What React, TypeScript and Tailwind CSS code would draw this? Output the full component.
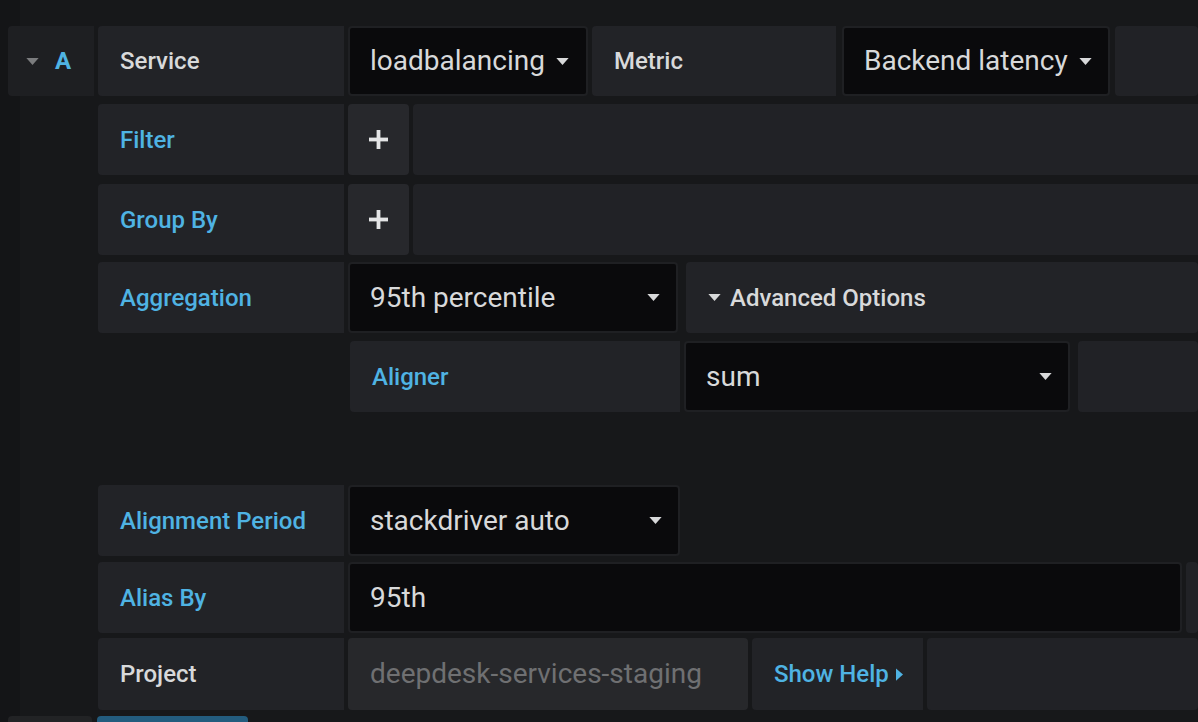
import type { ReactNode } from "react";

const font = { fontFamily: "Roboto, 'Noto Sans', sans-serif" };

function Caret({ className = "" }: { className?: string }) {
  return (
    <svg viewBox="0 0 14 8" className={`w-[13px] h-[7px] shrink-0 ${className}`}>
      <path d="M0 0 L14 0 L7 8 Z" fill="currentColor" />
    </svg>
  );
}

function Label({ children, blue = false, w = "w-[246px]" }: { children: ReactNode; blue?: boolean; w?: string }) {
  return (
    <div
      className={`${w} h-full shrink-0 flex items-center pl-[22px] rounded-l-[4px] bg-[#222327] text-[24px] font-medium whitespace-nowrap ${
        blue ? "text-[#4fb3e3]" : "text-[#d8d9da]"
      }`}
    >
      {children}
    </div>
  );
}

function Select({ value, w, inline = false, className = "" }: { value: string; w: string; inline?: boolean; className?: string }) {
  return (
    <div
      className={`${w} h-full shrink-0 flex items-center pl-[20px] pr-[16px] rounded-[4px] border-2 border-[#1f2023] bg-[#0a0a0c] text-[28px] text-[#d8d9da] whitespace-nowrap ${
        inline ? "gap-[11px]" : "justify-between"
      } ${className}`}
    >
      <span>{value}</span>
      <Caret />
    </div>
  );
}

function Filler({ className = "" }: { className?: string }) {
  return <div className={`flex-1 h-full rounded-[4px] bg-[#212226] ${className}`} />;
}

function Plus() {
  return (
    <div className="w-[61px] h-full shrink-0 flex items-center justify-center rounded-[4px] bg-[#27282c]">
      <svg viewBox="0 0 20 20" className="w-[19px] h-[19px]">
        <rect x="8" y="0" width="4" height="20" fill="#e4e5e6" />
        <rect x="0" y="8" width="20" height="4" fill="#e4e5e6" />
      </svg>
    </div>
  );
}

export default function App() {
  return (
    <div className="w-[1198px] h-[722px] overflow-hidden bg-[#17181a] flex" style={font}>
      <div className="w-[20px] shrink-0 bg-[#141517]" />
      <div className="flex-1 flex flex-col pt-[26px] -ml-[12px]">
        <div className="flex shrink-0 h-[70px] gap-[4px]">
          <div className="w-[86px] h-full shrink-0 flex items-center pl-[18px] gap-[16px] rounded-l-[4px] bg-[#1e1f22]">
            <Caret className="text-[#7b7c7e]" />
            <span className="text-[24px] font-bold text-[#4fb3e3]">A</span>
          </div>
          <Label>Service</Label>
          <Select value="loadbalancing" w="w-[240px]" inline />
          <Label w="w-[244px]">Metric</Label>
          <Select value="Backend latency" w="w-[268px]" inline className="ml-[2px]" />
          <Filler className="ml-[1px]" />
        </div>

        <div className="flex shrink-0 flex-col pl-[90px]">
          <div className="flex shrink-0 h-[71px] gap-[4px] mt-[8px]">
            <Label blue>Filter</Label>
            <Plus />
            <Filler className="rounded-r-none" />
          </div>

          <div className="flex shrink-0 h-[71px] gap-[4px] mt-[9px]">
            <Label blue>Group By</Label>
            <Plus />
            <Filler className="rounded-r-none" />
          </div>

          <div className="flex shrink-0 h-[71px] gap-[4px] mt-[7px]">
            <Label blue>Aggregation</Label>
            <Select value="95th percentile" w="w-[330px]" />
            <div className="ml-[4px] flex-1 h-full flex items-center pl-[22px] gap-[9px] rounded-[4px] bg-[#222327] text-[24px] font-medium text-[#d8d9da] whitespace-nowrap">
              <Caret />
              <span>Advanced Options</span>
            </div>
          </div>

          <div className="flex shrink-0 h-[71px] gap-[4px] mt-[8px] pl-[252px]">
            <Label blue w="w-[330px]">Aligner</Label>
            <Select value="sum" w="w-[386px]" />
            <Filler className="ml-[4px]" />
          </div>

          <div className="flex shrink-0 h-[71px] gap-[4px] mt-[73px]">
            <Label blue>Alignment Period</Label>
            <Select value="stackdriver auto" w="w-[332px]" />
          </div>

          <div className="flex shrink-0 h-[71px] gap-[4px] mt-[6px]">
            <Label blue>Alias By</Label>
            <div className="w-[834px] h-full shrink-0 flex items-center pl-[20px] rounded-[4px] border-2 border-[#1f2023] bg-[#0a0a0c] text-[28px] text-[#d8d9da]">
              95th
            </div>
            <Filler />
          </div>

          <div className="flex shrink-0 h-[72px] gap-[4px] mt-[5px]">
            <Label>Project</Label>
            <div className="w-[400px] h-full shrink-0 flex items-center pl-[22px] rounded-[4px] bg-[#27282b] text-[28px] text-[#6f7072] whitespace-nowrap">
              deepdesk-services-staging
            </div>
            <div className="w-[171px] h-full shrink-0 flex items-center pl-[22px] gap-[7px] rounded-l-[4px] bg-[#222327] text-[24px] font-medium text-[#4fb3e3] whitespace-nowrap">
              <span>Show Help</span>
              <svg viewBox="0 0 8 14" className="w-[7px] h-[13px]">
                <path d="M0 0 L8 7 L0 14 Z" fill="currentColor" />
              </svg>
            </div>
            <Filler />
          </div>
        </div>

        <div className="flex shrink-0 h-[30px] gap-[5px] mt-[6px]">
          <div className="w-[84px] h-full rounded-t-[4px] bg-[#222325]" />
          <div className="w-[151px] h-full rounded-t-[4px] bg-[#235c7e]" />
        </div>
      </div>
    </div>
  );
}
